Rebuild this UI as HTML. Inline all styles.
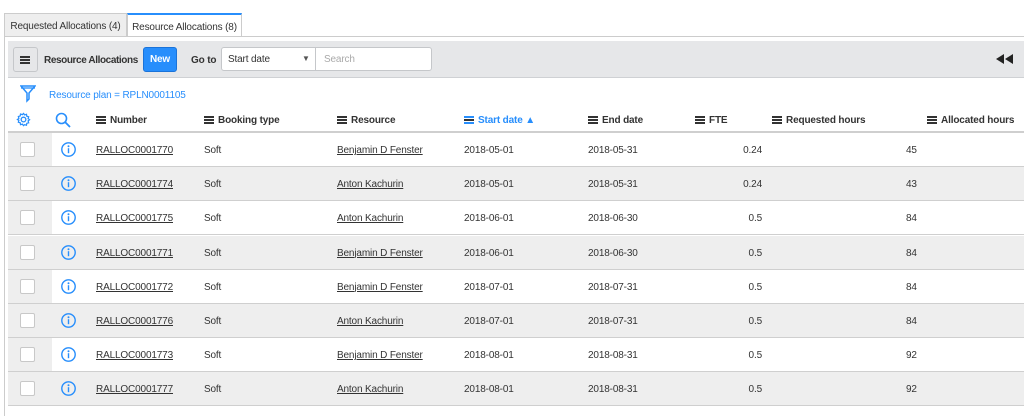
<!DOCTYPE html>
<html><head><style>
*{margin:0;padding:0;box-sizing:border-box}
html,body{width:1024px;height:416px;overflow:hidden}
body{background:#fff;font-family:"Liberation Sans",sans-serif;font-size:10px;letter-spacing:-0.15px;color:#333;position:relative}
.a{position:absolute;white-space:nowrap}
.tab{position:absolute;top:13px;height:24px;border:1px solid #ccc;border-bottom:none;padding:7px 0 0;text-align:center;font-size:10px;color:#333;white-space:nowrap;overflow:hidden}
.frame{position:absolute;left:4px;top:36px;width:1030px;height:390px;border-left:1px solid #ccc;border-top:1px solid #ccc}
.tb{position:absolute;left:8px;top:41px;width:1016px;height:37px;background:#e6e7e9;border-bottom:1px solid #cfd1d4}
.hdr{position:absolute;top:115px;font-weight:bold;font-size:10px;color:#333;white-space:nowrap}
.hm{display:inline-block;width:10px;height:8px;border-top:2px solid #333;border-bottom:2px solid #333;position:relative;margin-right:4px;vertical-align:-1px}
.hm:after{content:"";position:absolute;left:0;right:0;top:1px;height:2px;background:#333}
.row{position:absolute;left:8px;width:1016px;height:34px;border-bottom:1px solid #cfcfcf}
.row .c0{position:absolute;left:0;top:0;width:44px;height:33px;background:#eeeeee}
.cb{position:absolute;left:12px;top:9px;width:15px;height:15px;background:#fff;border:1px solid #c8c8c8;border-radius:2px}
.row span{position:absolute;top:12px;white-space:nowrap}
.u{text-decoration:underline}
.info{position:absolute;left:53px;top:9px}
</style></head><body>
<div class="tab" style="left:4px;width:123px;background:#eeeeee">Requested Allocations (4)</div>
<div class="tab" style="left:127px;width:115px;background:#fff;border-top:2px solid #278efc">Resource Allocations (8)</div>
<div class="frame"></div>
<div class="tb"></div>
<div class="a" style="left:13px;top:47px;width:25px;height:25px;border:1px solid #c5c7ca;border-radius:3px;background:#e6e7e9"></div>
<div class="a" style="left:20px;top:56px;width:10px;height:8px;border-top:2px solid #333;border-bottom:2px solid #333"></div>
<div class="a" style="left:20px;top:59px;width:10px;height:2px;background:#333"></div>
<div class="a" style="left:44px;top:55px;font-weight:bold;color:#333;letter-spacing:-0.4px">Resource Allocations</div>
<div class="a" style="left:143px;top:47px;width:34px;height:25px;background:#278efc;border:1px solid #1a73d9;border-radius:3px;color:#fff;font-weight:bold;text-align:center;line-height:23px">New</div>
<div class="a" style="left:191px;top:55px;font-weight:bold">Go to</div>
<div class="a" style="left:221px;top:47px;width:211px;height:24px;background:#fff;border:1px solid #c5c7ca;border-radius:3px"></div>
<div class="a" style="left:315px;top:47px;width:1px;height:24px;background:#c5c7ca"></div>
<div class="a" style="left:228px;top:54px">Start date</div>
<div class="a" style="left:302px;top:54px;font-size:8px;color:#555">▼</div>
<div class="a" style="left:324px;top:54px;color:#aaa">Search</div>
<svg class="a" style="left:996px;top:54px" width="18" height="10" viewBox="0 0 18 10"><path d="M0 5L8 0V10ZM9 5L17 0V10Z" fill="#222"/></svg>
<svg class="a" style="left:20px;top:85px" width="16" height="18" viewBox="0 0 16 18"><path d="M1 1H15L9 8V14L7 16V8Z" fill="none" stroke="#278efc" stroke-width="1.5"/><line x1="1" y1="3" x2="15" y2="3" stroke="#278efc" stroke-width="1.3"/></svg>
<div class="a" style="left:49px;top:90px;color:#278efc">Resource plan = RPLN0001105</div>
<svg class="a" style="left:16px;top:112px" width="15" height="15" viewBox="0 0 16 16"><circle cx="8" cy="8" r="2.5" fill="none" stroke="#278efc" stroke-width="1.4"/><path d="M8 1.5l1.2 1.6 2-.6.3 2 2 .6-.6 2 1.6 1.2-1.6 1.2.6 2-2 .6-.3 2-2-.6L8 14.5l-1.2-1.6-2 .6-.3-2-2-.6.6-2L1.5 8l1.6-1.2-.6-2 2-.6.3-2 2 .6z" fill="none" stroke="#278efc" stroke-width="1.3"/></svg>
<svg class="a" style="left:55px;top:112px" width="16" height="16" viewBox="0 0 16 16"><circle cx="6.5" cy="6.5" r="5" fill="none" stroke="#278efc" stroke-width="1.6"/><line x1="10" y1="10" x2="15" y2="15" stroke="#278efc" stroke-width="1.8"/></svg>
<div class="hdr" style="left:96px"><i class="hm"></i>Number</div>
<div class="hdr" style="left:204px"><i class="hm"></i>Booking type</div>
<div class="hdr" style="left:337px"><i class="hm"></i>Resource</div>
<div class="hdr" style="left:464px;color:#278efc"><i class="hm" style="border-color:#278efc"></i>Start date ▲</div>
<div class="hdr" style="left:588px"><i class="hm"></i>End date</div>
<div class="hdr" style="left:695px"><i class="hm"></i>FTE</div>
<div class="hdr" style="left:772px"><i class="hm"></i>Requested hours</div>
<div class="hdr" style="left:927px"><i class="hm"></i>Allocated hours</div>
<div class="a" style="left:8px;top:131px;width:1016px;height:2px;background:#cfcfcf"></div>
<div id="rows"></div>
<script>
var d=[["RALLOC0001770","Benjamin D Fenster","2018-05-01","2018-05-31","0.24","45"],
["RALLOC0001774","Anton Kachurin","2018-05-01","2018-05-31","0.24","43"],
["RALLOC0001775","Anton Kachurin","2018-06-01","2018-06-30","0.5","84"],
["RALLOC0001771","Benjamin D Fenster","2018-06-01","2018-06-30","0.5","84"],
["RALLOC0001772","Benjamin D Fenster","2018-07-01","2018-07-31","0.5","84"],
["RALLOC0001776","Anton Kachurin","2018-07-01","2018-07-31","0.5","84"],
["RALLOC0001773","Benjamin D Fenster","2018-08-01","2018-08-31","0.5","92"],
["RALLOC0001777","Anton Kachurin","2018-08-01","2018-08-31","0.5","92"]];
var ic='<svg class="info" width="15" height="15" viewBox="0 0 15 15"><circle cx="7.5" cy="7.5" r="6.7" fill="none" stroke="#278efc" stroke-width="1.4"/><circle cx="7.5" cy="4.3" r="1" fill="#278efc"/><rect x="6.8" y="6.2" width="1.4" height="5" fill="#278efc"/></svg>';
var h="";
d.forEach(function(r,i){var t=133+i*34.2;
h+='<div class="row" style="top:'+t+'px;background:'+(i%2?'#eeeeee':'#fff')+'"><div class="c0"><div class="cb"></div></div>'+ic+
'<span class="u" style="left:88px">'+r[0]+'</span><span style="left:196px">Soft</span><span class="u" style="left:329px">'+r[1]+'</span>'+
'<span style="left:456px">'+r[2]+'</span><span style="left:580px">'+r[3]+'</span><span style="right:262px">'+r[4]+'</span><span style="left:898px">'+r[5]+'</span></div>';});
document.getElementById("rows").innerHTML=h;
</script>
</body></html>
